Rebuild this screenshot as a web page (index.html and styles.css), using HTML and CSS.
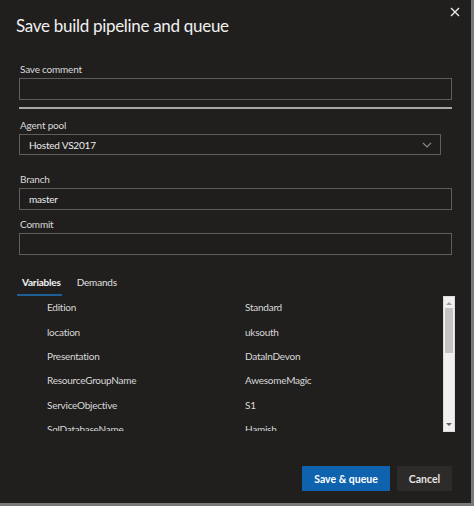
FILE: index.html
```html
<!DOCTYPE html>
<html lang="en">
<head>
<meta charset="utf-8">
<title>Save build pipeline and queue</title>
<link rel="stylesheet" href="styles.css">
</head>
<body>
<div class="dialog">
  <button class="close" aria-label="Close">
    <svg width="10" height="10" viewBox="0 0 10 10"><path d="M1 1L9 9M9 1L1 9" stroke="#e8e8e8" stroke-width="1.4" fill="none"/></svg>
  </button>
  <h1 class="title">Save build pipeline and queue</h1>
  <div class="form">
    <label class="label first">Save comment</label>
    <div class="input"></div>
    <div class="divider"></div>

    <label class="label pool">Agent pool</label>
    <div class="input select">
      <span>Hosted VS2017</span>
      <svg class="chev" width="10" height="6" viewBox="0 0 10 6"><path d="M1 1L5 5L9 1" stroke="#8a8a8a" stroke-width="1.1" fill="none"/></svg>
    </div>

    <label class="label branch">Branch</label>
    <div class="input"><span>master</span></div>

    <label class="label commit">Commit</label>
    <div class="input"></div>

    <div class="tabs">
      <div class="tab active">Variables</div>
      <div class="tab">Demands</div>
    </div>

    <div class="vars">
      <div class="list">
        <div class="row"><span class="name">Edition</span><span class="val">Standard</span></div>
        <div class="row"><span class="name">location</span><span class="val">uksouth</span></div>
        <div class="row"><span class="name">Presentation</span><span class="val">DataInDevon</span></div>
        <div class="row"><span class="name">ResourceGroupName</span><span class="val">AwesomeMagic</span></div>
        <div class="row"><span class="name">ServiceObjective</span><span class="val">S1</span></div>
        <div class="row"><span class="name">SqlDatabaseName</span><span class="val">Hamish</span></div>
      </div>
      <div class="scrollbar">
        <div class="arrow up"></div>
        <div class="thumb"></div>
        <div class="track"></div>
        <div class="arrow down"></div>
      </div>
    </div>

    <div class="actions">
      <button class="btn primary">Save &amp; queue</button>
      <button class="btn secondary">Cancel</button>
    </div>
  </div>
</div>
</body>
</html>
```

FILE: styles.css
```css
* { box-sizing: border-box; }
html, body { margin: 0; padding: 0; }
body {
  width: 474px;
  height: 506px;
  overflow: hidden;
  background: #7a7a7a;
  font-family: Lato, "Noto Sans", sans-serif;
}
.dialog {
  position: relative;
  width: 471px;
  height: 503px;
  background: #201f1e;
  color: #d4d4d4;
  display: flex;
  flex-direction: column;
}
.close {
  position: absolute;
  top: 7px;
  left: 450px;
  width: 10px;
  height: 10px;
  padding: 0;
  border: 0;
  background: none;
  display: flex;
}
.title {
  margin: 14px 0 0 16px;
  font-weight: 400;
  font-size: 17px;
  line-height: 24px;
  color: #f0f0f0;
  letter-spacing: -0.3px;
}
.form {
  padding: 0 19px;
  display: flex;
  flex-direction: column;
}
.label {
  font-size: 10px;
  line-height: 14px;
  color: #dadada;
  margin-bottom: 2px;
  padding-left: 1px;
  letter-spacing: -0.2px;
}
.label.first { margin-top: 24px; }
.label.pool { margin-top: 9px; }
.label.branch { margin-top: 17px; }
.label.commit { margin-top: 7px; }
.input {
  height: 22px;
  border: 1px solid #5e5e5e;
  background: #1f1e1d;
  display: flex;
  align-items: center;
  padding-left: 9px;
  font-size: 10px;
  letter-spacing: -0.2px;
  color: #ececec;
}
.select {
  width: 422px;
  justify-content: space-between;
  padding-right: 8px;
  height: 21px;
}
.divider {
  height: 2px;
  background: #a8a8a8;
  margin-top: 7px;
}
.tabs {
  display: flex;
  margin-top: 15px;
  margin-left: -2px;
}
.tab {
  font-size: 10px;
  line-height: 14px;
  color: #e0e0e0;
  padding: 5px 6px 5px 5px;
  letter-spacing: -0.2px;
}
.tab.active {
  font-weight: 700;
  color: #f4f4f4;
  border-bottom: 2px solid #1e5f96;
  padding-left: 5px;
  padding-right: 1px;
}
.tab + .tab { padding-left: 15px; }
.vars {
  display: flex;
  margin-right: -3px;
  height: 137px;
}
.list {
  flex: 1;
  overflow: hidden;
  height: 136px;
  margin-top: -1px;
}
.row {
  height: 24.4px;
  display: flex;
  align-items: center;
  padding-left: 28px;
  font-size: 10px;
  letter-spacing: -0.25px;
  color: #d8d8d8;
}
.name { width: 198px; }
.scrollbar {
  width: 12px;
  height: 136px;
  background: #f0f0f0;
  border: 1px solid #dcdcdc;
  display: flex;
  flex-direction: column;
  align-items: center;
}
.arrow {
  width: 0; height: 0;
  border-left: 3px solid transparent;
  border-right: 3px solid transparent;
}
.arrow.up { border-bottom: 3px solid #a0a0a0; margin-top: 5px; }
.arrow.down { border-top: 3px solid #606060; margin-bottom: 5px; }
.thumb {
  width: 8px;
  height: 45px;
  background: #c4c4c4;
  margin-top: 3px;
}
.track { flex: 1; }
.actions {
  display: flex;
  justify-content: flex-end;
  gap: 7px;
  margin-top: 33px;
}
.btn {
  height: 25px;
  border: 0;
  font-family: Lato, "Noto Sans", sans-serif;
  font-size: 10.5px;
  font-weight: 700;
  padding: 0;
}
.primary {
  width: 88px;
  background: #0f63ae;
  color: #ffffff;
}
.secondary {
  width: 55px;
  background: #2c2b2a;
  color: #e4e4e4;
}
```
